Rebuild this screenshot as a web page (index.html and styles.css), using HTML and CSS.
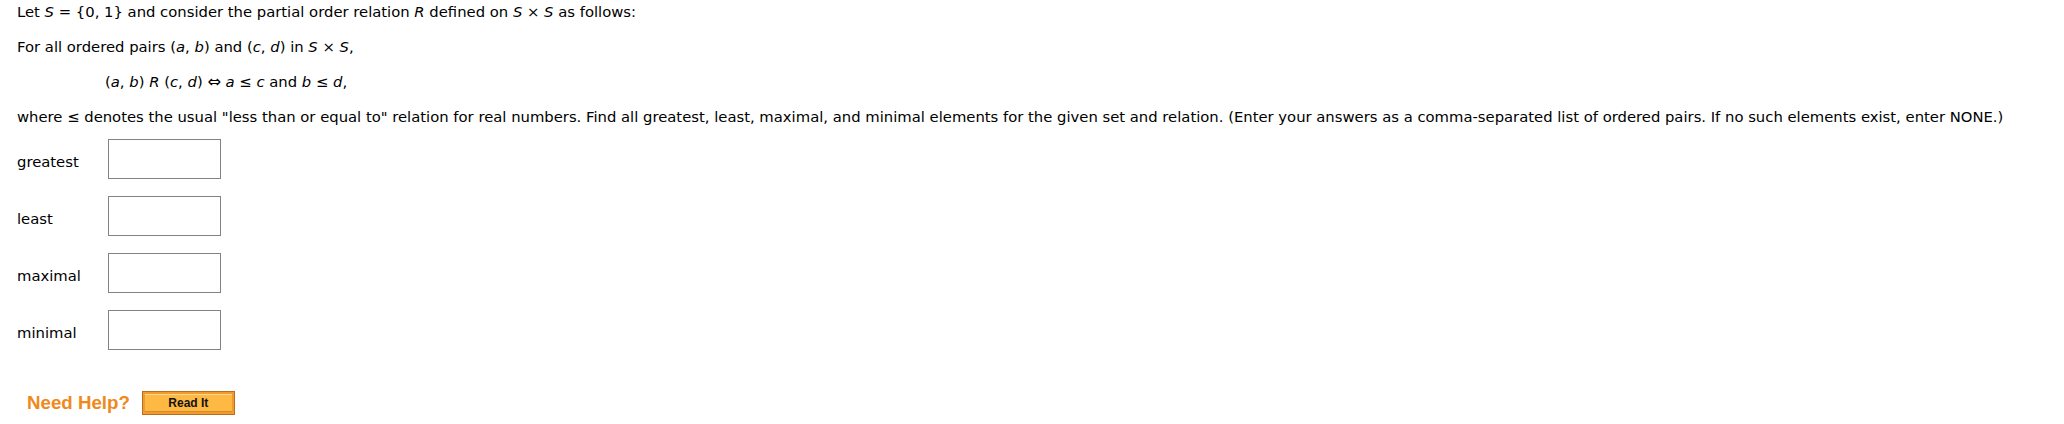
FILE: index.html
```html
<!DOCTYPE html>
<html>
<head>
<meta charset="utf-8">
<link rel="stylesheet" href="styles.css">
</head>
<body>
<div class="question">
  <div class="text">
    <p class="line">Let <i>S</i> = {0, 1} and consider the partial order relation <i>R</i> defined on <i>S</i> × <i>S</i> as follows:</p>
    <p class="line">For all ordered pairs (<i>a</i>, <i>b</i>) and (<i>c</i>, <i>d</i>) in <i>S</i> × <i>S</i>,</p>
    <p class="line indent">(<i>a</i>, <i>b</i>) <i>R</i> (<i>c</i>, <i>d</i>) <span class="iff">⇔</span> <i>a</i> ≤ <i>c</i> and <i>b</i> ≤ <i>d</i>,</p>
    <p class="line">where ≤ denotes the usual "less than or equal to" relation for real numbers. Find all greatest, least, maximal, and minimal elements for the given set and relation. (Enter your answers as a comma-separated list of ordered pairs. If no such elements exist, enter NONE.)</p>
  </div>
  <div class="answers">
    <div class="row"><span class="label">greatest</span><span class="box"></span></div>
    <div class="row"><span class="label">least</span><span class="box"></span></div>
    <div class="row"><span class="label">maximal</span><span class="box"></span></div>
    <div class="row"><span class="label">minimal</span><span class="box"></span></div>
  </div>
  <div class="help">
    <span class="need">Need Help?</span>
    <span class="readit"><span class="readit-inner">Read It</span></span>
  </div>
</div>
</body>
</html>
```
FILE: styles.css
```css
html, body {
  margin: 0;
  padding: 0;
  background: #fff;
}
.question {
  display: flex;
  flex-direction: column;
  align-items: flex-start;
  padding: 2px 0 0 17px;
  font-family: "DejaVu Sans", Verdana, sans-serif;
  font-size: 14.8px;
  color: #000;
}
.text {
  display: flex;
  flex-direction: column;
  gap: 15px;
}
.line {
  margin: 0;
  line-height: 20px;
  white-space: nowrap;
}
.indent {
  padding-left: 88px;
}
.iff {
  font-size: 16px;
}
.answers {
  display: flex;
  flex-direction: column;
  gap: 17px;
  margin-top: 12px;
}
.row {
  display: flex;
  align-items: center;
}
.label {
  width: 91px;
  padding-top: 5px;
}
.box {
  width: 111px;
  height: 38px;
  border: 1px solid #838383;
  background: #fff;
}
.help {
  display: flex;
  align-items: center;
  margin-top: 41px;
  padding-left: 10px;
  gap: 12px;
}
.need {
  font-family: "Liberation Sans", Arial, sans-serif;
  font-weight: bold;
  font-size: 18.7px;
  color: #f0891c;
}
.readit {
  display: block;
  width: 91px;
  height: 22px;
  border: 1px solid #b8701e;
  background: #f29a2e;
  box-sizing: content-box;
}
.readit-inner {
  display: flex;
  align-items: center;
  justify-content: center;
  margin: 2px;
  background: #fdb942;
  border-top: 1px solid #fed79a;
  border-bottom: 1px solid #d98a28;
  box-sizing: border-box;
  height: 18px;
  font-family: "Liberation Sans", Arial, sans-serif;
  font-weight: bold;
  font-size: 12px;
  color: #111;
}
```
